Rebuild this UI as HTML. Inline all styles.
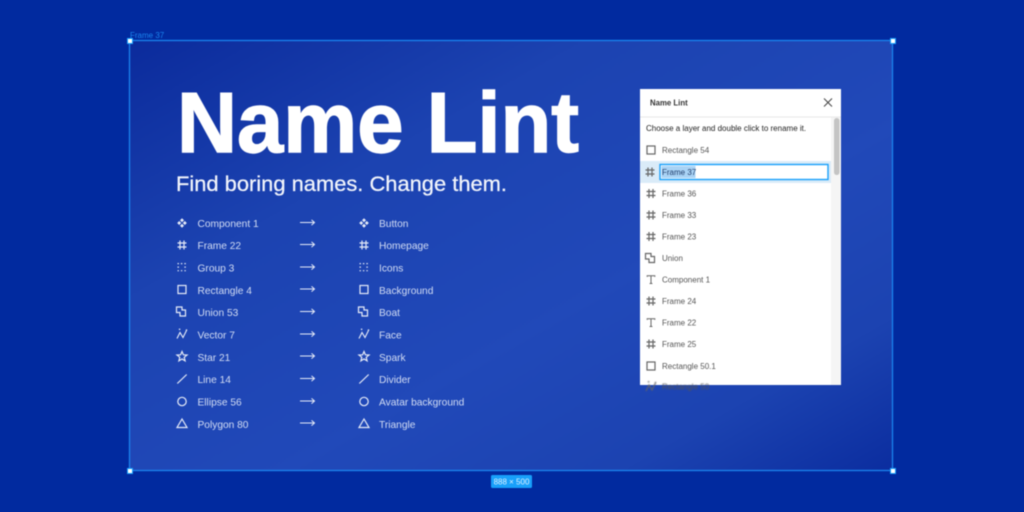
<!DOCTYPE html>
<html><head><meta charset="utf-8"><style>
html,body{margin:0;padding:0;width:1024px;height:512px;overflow:hidden;background:#012a9f}
svg{display:block;filter:blur(.45px)}
text{font-family:"Liberation Sans",sans-serif}
.l{font-size:10.2px;fill:#d3ddf4}
.p{font-size:8px;fill:#555}
</style></head><body>
<svg width="1024" height="512" viewBox="0 0 1024 512" xmlns="http://www.w3.org/2000/svg">
<defs>
<linearGradient id="g" x1="0" y1="0" x2="1" y2="1">
<stop offset="0" stop-color="#0b2b9c"/><stop offset=".3" stop-color="#1c43b1"/><stop offset=".6" stop-color="#2149b9"/><stop offset=".82" stop-color="#1c43b1"/><stop offset="1" stop-color="#0b2d9f"/>
</linearGradient>
<g id="comp" fill="currentColor"><path d="M0-4.8 2-2.8 0-.8-2-2.8ZM0 .8 2 2.8 0 4.8-2 2.8ZM-4.8 0-2.8-2-.8 0-2.8 2ZM.8 0 2.8-2 4.8 0 2.8 2Z"/></g>
<g id="frame" fill="none" stroke="currentColor" stroke-width="1.2"><path d="M-2-4.5V4.5M2-4.5V4.5M-4.5-2H4.5M-4.5 2H4.5"/></g>
<g id="group" fill="currentColor"><path d="M-4.5-4.5h1.4v1.2h-1.4ZM-1.1-4.5h1.4v1.2h-1.4ZM2.4-4.5h1.4v1.2H2.4ZM-4.5-1h1.4V.2h-1.4ZM2.4-1h1.4V.2H2.4ZM-4.5 2.6h1.4v1.2h-1.4ZM-1.1 2.6h1.4v1.2h-1.4ZM2.4 2.6h1.4v1.2H2.4Z"/></g>
<g id="rect" fill="none" stroke="currentColor" stroke-width="1.2"><rect x="-4" y="-4" width="8" height="8"/></g>
<g id="union" fill="none" stroke="currentColor" stroke-width="1.2"><path d="M-5-4.5H.5V-1.5H4V4.5H-1.5V1H-5Z"/></g>
<g id="vec" fill="none" stroke="currentColor" stroke-width="1.1"><path d="M-5 4-2-2 1 3 4.5-4"/><circle cx="-2.4" cy="-5.2" r=".8" fill="currentColor" stroke="none"/><circle cx="4.5" cy="-4.5" r=".8" fill="currentColor" stroke="none"/></g>
<g id="star" fill="none" stroke="currentColor" stroke-width="1.2"><path d="M0-5 1.4-1.7 5-1.5 2.2.8 3.1 4.4 0 2.5-3.1 4.4-2.2.8-5-1.5-1.4-1.7Z"/></g>
<g id="line" fill="none" stroke="currentColor" stroke-width="1.2"><path d="M-4.7 4.5 4.7-4.5"/></g>
<g id="ell" fill="none" stroke="currentColor" stroke-width="1.2"><circle r="4.2"/></g>
<g id="tri" fill="none" stroke="currentColor" stroke-width="1.2"><path d="M0-4.5 5 4H-5Z"/></g>
<g id="T" fill="none" stroke="currentColor" stroke-width="1"><path d="M-3.8-2.6V-3.8H3.8V-2.6M0-3.8V4M-1.4 4H1.4"/></g>
<g id="arr" fill="none" stroke="#e6ebf8" stroke-width="1"><path d="M0 0H14.5M11.5-2.6 14.5 0 11.5 2.6"/></g>
</defs>
<rect width="1024" height="512" fill="#012a9f"/>
<rect x="130" y="41" width="763" height="430" fill="url(#g)"/>
<rect x="129.5" y="40.5" width="763" height="430" fill="none" stroke="#1b84ee" stroke-width="1.3"/>
<text x="130" y="38" font-size="8" fill="#1b84ee">Frame 37</text>
<g fill="#fff" stroke="#18a0fb" stroke-width="1"><rect x="127.5" y="38.5" width="5" height="5"/><rect x="890.5" y="38.5" width="5" height="5"/><rect x="127.5" y="468.5" width="5" height="5"/><rect x="890.5" y="468.5" width="5" height="5"/></g>
<rect x="491" y="475" width="41" height="13" rx="1.5" fill="#18a0fb"/>
<text x="511.5" y="484.5" font-size="8" fill="#dff1ff" text-anchor="middle">888 × 500</text>

<text x="177" y="152" font-size="85" font-weight="700" fill="#fff" stroke="#fff" stroke-width="1.4" textLength="402" lengthAdjust="spacingAndGlyphs">Name Lint</text>
<text x="176" y="191" font-size="21.5" fill="#f2f5fc" stroke="#f2f5fc" stroke-width=".25" textLength="331" lengthAdjust="spacingAndGlyphs">Find boring names. Change them.</text>

<g color="#e6ebf8">
<use href="#comp" x="182" y="223"/><text class="l" x="197.5" y="227">Component 1</text><use href="#arr" x="300" y="222.5"/><use href="#comp" x="364" y="223"/><text class="l" x="379" y="227">Button</text>
<use href="#frame" x="182" y="245"/><text class="l" x="197.5" y="249">Frame 22</text><use href="#arr" x="300" y="244.5"/><use href="#frame" x="364" y="245"/><text class="l" x="379" y="249">Homepage</text>
<use href="#group" x="182" y="267.5"/><text class="l" x="197.5" y="271.5">Group 3</text><use href="#arr" x="300" y="267"/><use href="#group" x="364" y="267.5"/><text class="l" x="379" y="271.5">Icons</text>
<use href="#rect" x="182" y="289.5"/><text class="l" x="197.5" y="293.8">Rectangle 4</text><use href="#arr" x="300" y="289"/><use href="#rect" x="364" y="289.5"/><text class="l" x="379" y="293.8">Background</text>
<use href="#union" x="181.5" y="311.5"/><text class="l" x="197.5" y="316">Union 53</text><use href="#arr" x="300" y="311.5"/><use href="#union" x="363.5" y="311.5"/><text class="l" x="379" y="316">Boat</text>
<use href="#vec" x="182" y="334.5"/><text class="l" x="197.5" y="338.5">Vector 7</text><use href="#arr" x="300" y="334"/><use href="#vec" x="364" y="334.5"/><text class="l" x="379" y="338.5">Face</text>
<use href="#star" x="182" y="356.5"/><text class="l" x="197.5" y="361">Star 21</text><use href="#arr" x="300" y="356"/><use href="#star" x="364" y="356.5"/><text class="l" x="379" y="361">Spark</text>
<use href="#line" x="182" y="379"/><text class="l" x="197.5" y="383">Line 14</text><use href="#arr" x="300" y="378.5"/><use href="#line" x="364" y="379"/><text class="l" x="379" y="383">Divider</text>
<use href="#ell" x="182" y="401.5"/><text class="l" x="197.5" y="405.5">Ellipse 56</text><use href="#arr" x="300" y="401"/><use href="#ell" x="364" y="401.5"/><text class="l" x="379" y="405.5">Avatar background</text>
<use href="#tri" x="182" y="423.5"/><text class="l" x="197.5" y="428">Polygon 80</text><use href="#arr" x="300" y="423"/><use href="#tri" x="364" y="423.5"/><text class="l" x="379" y="428">Triangle</text>
</g>

<rect x="640" y="89" width="201" height="296" fill="#fff"/>
<rect x="640" y="116.5" width="201" height="1" fill="#e8e8e8"/>
<rect x="831" y="117.5" width="10" height="267.5" fill="#f5f5f5"/>
<rect x="834" y="118" width="5.5" height="57" rx="2.7" fill="#c4c4c4"/>
<text x="650" y="105.5" font-size="7.8" font-weight="700" fill="#333">Name Lint</text>
<path d="M824 98.5 832 106.5M832 98.5 824 106.5" stroke="#444" stroke-width="1" fill="none"/>
<text x="646" y="131" font-size="8" fill="#222">Choose a layer and double click to rename it.</text>
<rect x="640" y="161" width="191" height="22" fill="#daebf8"/>
<rect x="660" y="164.5" width="168" height="15" fill="#fff" stroke="#18a0fb" stroke-width="1.4"/>
<rect x="661.5" y="166" width="34" height="12" fill="#a9d3f5"/>
<g color="#666">
<use href="#rect" x="651" y="150"/><text class="p" x="662" y="153">Rectangle 54</text>
<use href="#frame" x="650" y="172"/><text class="p" x="662" y="175" style="fill:#24406e">Frame 37</text>
<use href="#frame" x="651" y="193.5"/><text class="p" x="662" y="196.5">Frame 36</text>
<use href="#frame" x="651" y="215"/><text class="p" x="662" y="218">Frame 33</text>
<use href="#frame" x="651" y="236.5"/><text class="p" x="662" y="239.5">Frame 23</text>
<use href="#union" x="650.5" y="258"/><text class="p" x="662" y="261">Union</text>
<use href="#T" x="651" y="279.5"/><text class="p" x="662" y="282.5">Component 1</text>
<use href="#frame" x="651" y="301"/><text class="p" x="662" y="304">Frame 24</text>
<use href="#T" x="651" y="322.5"/><text class="p" x="662" y="325.5">Frame 22</text>
<use href="#frame" x="651" y="344"/><text class="p" x="662" y="347">Frame 25</text>
<use href="#rect" x="651" y="366"/><text class="p" x="662" y="369">Rectangle 50.1</text>
<svg x="640" y="375" width="191" height="10"><use href="#vec" x="11" y="12"/><text class="p" x="22" y="14.5">Rectangle 50</text></svg>
</g>
</svg>
</body></html>
